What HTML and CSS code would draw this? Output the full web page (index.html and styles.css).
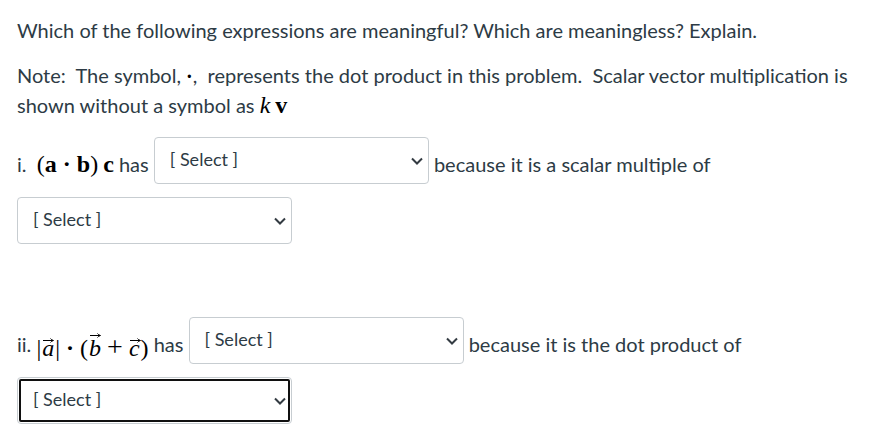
FILE: index.html
```
<!DOCTYPE html>
<html lang="en">
<head>
  <meta charset="utf-8">
  <title>Dot product question</title>
  <link rel="stylesheet" href="styles.css">
</head>
<body>
<div class="question">
  <p>Which of the following expressions are meaningful? Which are meaningless? Explain.</p>

  <p>Note:&nbsp; The symbol, <b class="dot">·</b>,&nbsp; represents the dot product in this problem.&nbsp; Scalar vector multiplication is shown without a symbol as <span class="math"><i>k</i><b class="thin-left">v</b></span></p>

  <p>i.&nbsp; <span class="math"><span>(</span><b>a</b><b class="op">·</b><b>b</b><span>)</span><b class="thin-left">c</b></span> has
    <select aria-label="Expression i is">
      <option>[ Select ]</option>
      <option>meaning</option>
      <option>no meaning</option>
    </select>
    because it is a scalar multiple of
    <select aria-label="Expression i is a scalar multiple of">
      <option>[ Select ]</option>
      <option>a vector</option>
      <option>a scalar</option>
    </select>
  </p>

  <p>&nbsp;</p>

  <p>ii. <span class="math lowered"><span>|</span><i class="vec">a<svg viewBox="0 0 11 5"><path d="M0 2.5H10M7.5 .5Q8.5 2 10.5 2.5Q8.5 3 7.5 4.5"/></svg></i><span>|</span><b class="op">·</b><span>(</span><i class="vec tall">b<svg viewBox="0 0 11 5"><path d="M0 2.5H10M7.5 .5Q8.5 2 10.5 2.5Q8.5 3 7.5 4.5"/></svg></i><span class="plus">+</span><i class="vec">c<svg viewBox="0 0 11 5"><path d="M0 2.5H10M7.5 .5Q8.5 2 10.5 2.5Q8.5 3 7.5 4.5"/></svg></i><span>)</span></span> has
    <select aria-label="Expression ii is">
      <option>[ Select ]</option>
      <option>meaning</option>
      <option>no meaning</option>
    </select>
    because it is the dot product of
    <select class="active" aria-label="Expression ii is the dot product of">
      <option>[ Select ]</option>
      <option>two vectors</option>
      <option>a scalar and a vector</option>
    </select>
  </p>
</div>
</body>
</html>
```

FILE: styles.css
```
*, *::before, *::after {
  box-sizing: border-box;
}
body {
  margin: 0;
  background: #fff;
  color: #2d3b45;
  font-family: Lato, "Liberation Sans", sans-serif;
  font-size: 20px;
  line-height: 30px;
}
.question {
  padding: 15px 17px 0;
}
p {
  margin: 0 0 15px;
}

/* Dropdowns inside the sentences */
select {
  width: 275px;
  height: 47px;
  margin: 2px 0 11px;
  padding: 7px 28px 10px 15px;
  border: 1px solid #c7cdd1;
  border-radius: 4px;
  appearance: none;
  background: #fff url("data:image/svg+xml,%3Csvg xmlns='http://www.w3.org/2000/svg' viewBox='0 0 12 8'%3E%3Cpath d='M1 1.5L6 6.5L11 1.5' fill='none' stroke='%23333b42' stroke-width='2'/%3E%3C/svg%3E") no-repeat right 5px top 19px / 12px 8px;
  color: #2d3b45;
  font-family: inherit;
  font-size: 18px;
  vertical-align: 6px;
}
.active {
  outline: 2px solid #101010;
  outline-offset: -4px;
}

/* Formulas */
.math,
.dot {
  color: #000;
  font-family: "Liberation Serif", serif;
}
.dot {
  line-height: 20px;
}
.math {
  display: inline-flex;
  align-items: baseline;
  font-size: 24px;
  line-height: 24px;
}
.lowered {
  vertical-align: -4px;
}
.thin-left {
  margin-left: 5px;
}
.op {
  margin: 0 6px;
}
.plus {
  margin: 0 5px;
  font-size: 28px;
}
.vec {
  position: relative;
  padding: 0 1px;
}
.vec svg {
  position: absolute;
  left: 2px;
  top: 2px;
  width: 11px;
  height: 5px;
  fill: none;
  stroke: #000;
  stroke-width: 1;
}
.tall svg {
  top: -3px;
}
```
